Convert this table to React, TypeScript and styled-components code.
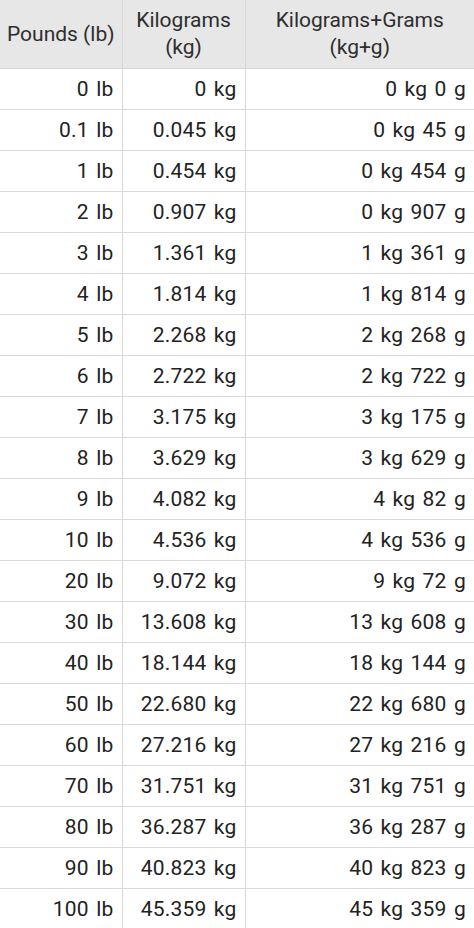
import React from "react";
import styled, { createGlobalStyle } from "styled-components";

const Global = createGlobalStyle`
  html, body { margin: 0; padding: 0; background: #ffffff; }
  body { font-family: Roboto, "Noto Sans", Arial, sans-serif; }
`;

const Table = styled.table`
  width: 474px;
  border-collapse: collapse;
  table-layout: fixed;
  font-family: Roboto, "Noto Sans", Arial, sans-serif;
  color: #222222;
`;

const Col = styled.col<{ $w: number }>`
  width: ${(p) => p.$w}px;
`;

const HeadCell = styled.th`
  height: 68px;
  padding: 0;
  background: #e7e7e7;
  border-right: 1px solid #d6d6d6;
  border-bottom: 1px solid #d6d6d6;
  font-weight: 400;
  font-size: 21px;
  line-height: 27px;
  text-align: center;
  vertical-align: middle;
  color: #2e2e2e;
  white-space: nowrap;
  overflow: hidden;
  &:last-child { border-right: none; }
`;

const Cell = styled.td`
  height: 40px;
  padding: 0 8px 0 0;
  border-right: 1px solid #d9d9d9;
  border-bottom: 1px solid #d9d9d9;
  font-size: 21px;
  letter-spacing: 0.2px;
  word-spacing: 2px;
  text-align: right;
  vertical-align: middle;
  white-space: nowrap;
  &:last-child { border-right: none; }
`;

const Row = styled.tr`
  &:last-child td { border-bottom: none; }
`;

const rows: [string, string, string][] = [
  ["0 lb", "0 kg", "0 kg 0 g"],
  ["0.1 lb", "0.045 kg", "0 kg 45 g"],
  ["1 lb", "0.454 kg", "0 kg 454 g"],
  ["2 lb", "0.907 kg", "0 kg 907 g"],
  ["3 lb", "1.361 kg", "1 kg 361 g"],
  ["4 lb", "1.814 kg", "1 kg 814 g"],
  ["5 lb", "2.268 kg", "2 kg 268 g"],
  ["6 lb", "2.722 kg", "2 kg 722 g"],
  ["7 lb", "3.175 kg", "3 kg 175 g"],
  ["8 lb", "3.629 kg", "3 kg 629 g"],
  ["9 lb", "4.082 kg", "4 kg 82 g"],
  ["10 lb", "4.536 kg", "4 kg 536 g"],
  ["20 lb", "9.072 kg", "9 kg 72 g"],
  ["30 lb", "13.608 kg", "13 kg 608 g"],
  ["40 lb", "18.144 kg", "18 kg 144 g"],
  ["50 lb", "22.680 kg", "22 kg 680 g"],
  ["60 lb", "27.216 kg", "27 kg 216 g"],
  ["70 lb", "31.751 kg", "31 kg 751 g"],
  ["80 lb", "36.287 kg", "36 kg 287 g"],
  ["90 lb", "40.823 kg", "40 kg 823 g"],
  ["100 lb", "45.359 kg", "45 kg 359 g"],
];

export default function App() {
  return (
    <>
      <Global />
      <Table>
        <colgroup>
          <Col $w={122} />
          <Col $w={123} />
          <Col $w={229} />
        </colgroup>
        <thead>
          <tr>
            <HeadCell>Pounds (lb)</HeadCell>
            <HeadCell>Kilograms<br />(kg)</HeadCell>
            <HeadCell>Kilograms+Grams<br />(kg+g)</HeadCell>
          </tr>
        </thead>
        <tbody>
          {rows.map((r) => (
            <Row key={r[0]}>
              <Cell>{r[0]}</Cell>
              <Cell>{r[1]}</Cell>
              <Cell>{r[2]}</Cell>
            </Row>
          ))}
        </tbody>
      </Table>
    </>
  );
}
